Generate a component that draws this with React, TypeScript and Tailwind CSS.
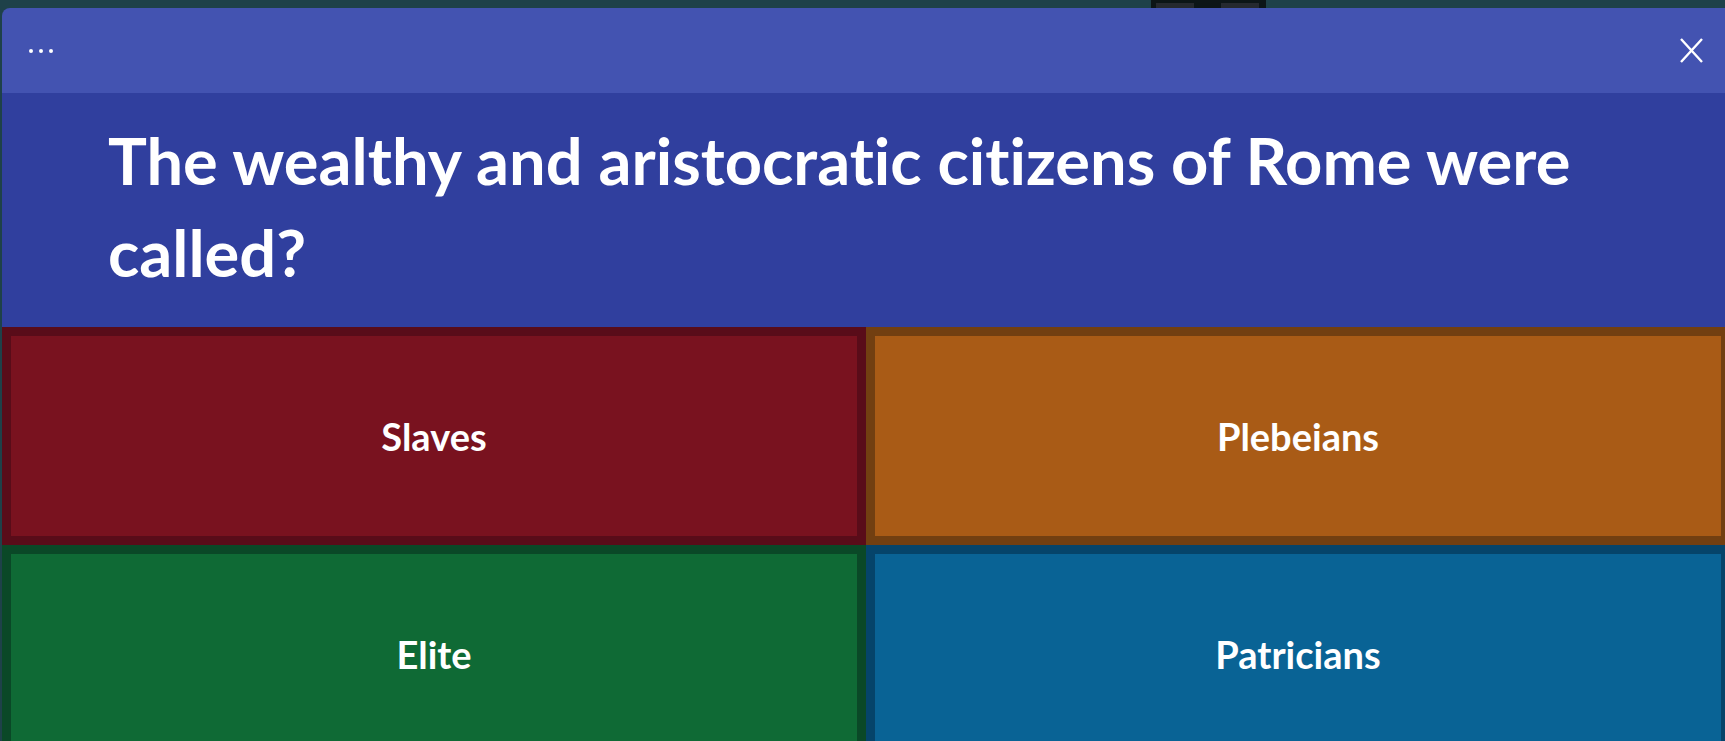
const answers = [
  { label: "Slaves", cell: "bg-[#79121f] border-[#590c19]" },
  { label: "Plebeians", cell: "bg-[#a95b16] border-[#723f11]" },
  { label: "Elite", cell: "bg-[#0f6a35] border-[#0a4827]" },
  { label: "Patricians", cell: "bg-[#096395] border-[#05446a]" },
];

const App: React.FC = () => {
  return (
    <div className="w-[1725px] h-[741px] overflow-hidden bg-[#1e4149] font-['Lato',sans-serif] [font-variant-ligatures:none]">
      {/* strip of the page behind the dialog */}
      <div className="h-2 flex">
        <div className="ml-[1151px] w-[115px] h-2 bg-[#0c1517] flex gap-[27px] px-[5px] pt-[3px]">
          <div className="w-[38px] h-[5px] bg-[#25292f]" />
          <div className="w-[38px] h-[5px] bg-[#25292f]" />
        </div>
      </div>

      <div className="ml-[2px] w-[1728px] rounded-tl-lg overflow-hidden">
        <div className="h-[85px] bg-[#4353b1] flex items-center justify-between pl-[27px] pr-[27px]">
          <div className="flex gap-[6px]">
            <span className="w-1 h-1 rounded-full bg-white" />
            <span className="w-1 h-1 rounded-full bg-white" />
            <span className="w-1 h-1 rounded-full bg-white" />
          </div>
          <svg width="23" height="25" viewBox="0 0 23 25" className="text-white">
            <path d="M1 1L22 24M22 1L1 24" stroke="currentColor" strokeWidth="2.4" fill="none" />
          </svg>
        </div>

        <div className="h-[234px] bg-[#303f9e] pl-[106px] pt-[21px]">
          <h1 className="text-white font-bold text-[65px] leading-[92px] max-w-[1500px]">
            The wealthy and aristocratic citizens of Rome were called?
          </h1>
        </div>

        <div className="grid grid-cols-2">
          {answers.map((a) => (
            <div
              key={a.label}
              className={`h-[218px] border-[9px] flex items-center justify-center ${a.cell}`}
            >
              <span className="text-white font-bold text-[38px]">{a.label}</span>
            </div>
          ))}
        </div>
      </div>
    </div>
  );
};

export default App;
